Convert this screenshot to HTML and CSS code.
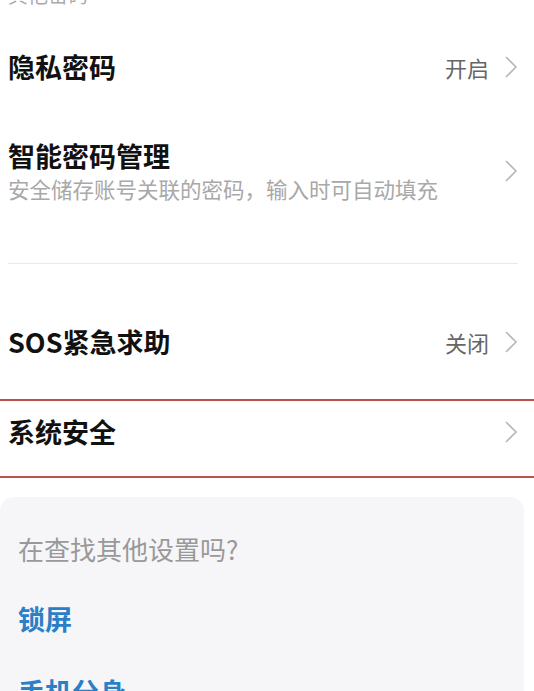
FILE: index.html
```html
<!DOCTYPE html>
<html lang="zh-CN">
<head>
    <meta charset="UTF-8">
    <meta name="viewport" content="width=device-width, initial-scale=1.0">
    <title>密码与安全</title>
    <link rel="stylesheet" href="styles.css">
</head>
<body>
    <div class="group-title">其他密码</div>

    <div class="row">
        <div class="row-title">隐私密码</div>
        <div class="row-value">开启</div>
        <svg class="chevron" viewBox="0 0 14 24"><path d="M2 2 L12 12 L2 22"/></svg>
    </div>

    <div class="row tall">
        <div class="row-text">
            <div class="row-title">智能密码管理</div>
            <div class="row-sub">安全储存账号关联的密码，输入时可自动填充</div>
        </div>
        <svg class="chevron" viewBox="0 0 14 24"><path d="M2 2 L12 12 L2 22"/></svg>
    </div>

    <div class="divider"></div>

    <div class="row">
        <div class="row-title">SOS紧急求助</div>
        <div class="row-value">关闭</div>
        <svg class="chevron" viewBox="0 0 14 24"><path d="M2 2 L12 12 L2 22"/></svg>
    </div>

    <div class="marked">
        <div class="row short">
            <div class="row-title">系统安全</div>
            <svg class="chevron" viewBox="0 0 14 24"><path d="M2 2 L12 12 L2 22"/></svg>
        </div>
    </div>

    <div class="more-card">
        <div class="more-title">在查找其他设置吗?</div>
        <div class="more-link">锁屏</div>
        <div class="more-link">手机分身</div>
    </div>
</body>
</html>
```

FILE: styles.css
```css
body {
    margin: 0;
    background: #fff;
    font-family: "Noto Sans CJK SC", "Noto Sans", sans-serif;
    color: #111;
    overflow: hidden;
}

.group-title {
    font-size: 20px;
    line-height: 20px;
    color: #aaa;
    margin-top: -15px;
    padding: 0 8px 17px;
}

.row {
    display: flex;
    align-items: center;
    height: 90px;
    padding: 0 16px 0 8px;
}

.row.tall {
    height: 118px;
}

.row.short {
    height: 62px;
}

.row-text {
    flex: 1;
}

.row-title {
    flex: 1;
    font-size: 27px;
    line-height: 36px;
    font-weight: 700;
    color: #111;
}

.row-sub {
    font-size: 21.5px;
    line-height: 30px;
    color: #a8a8a8;
}

.row-value {
    font-size: 22px;
    color: #666;
    margin-right: 15px;
}

.chevron {
    width: 14px;
    height: 24px;
    fill: none;
    stroke: #b8b8b8;
    stroke-width: 1.6;
}

.divider {
    height: 1px;
    background: #e9e9e9;
    margin: 33px 16px 33px 8px;
}

.marked {
    margin-top: 12px;
    border-top: 2px solid #b9534c;
    border-bottom: 2px solid #b9534c;
    padding-bottom: 13px;
}

.more-card {
    margin: 19px 10px 0 0;
    background: #f6f6f8;
    border-radius: 14px 14px 0 0;
    padding: 37px 18px 0;
}

.more-title {
    font-size: 26px;
    line-height: 30px;
    color: #999;
}

.more-link {
    margin-top: 37px;
    font-size: 27px;
    line-height: 36px;
    font-weight: 700;
    color: #2a7fc6;
}
```
